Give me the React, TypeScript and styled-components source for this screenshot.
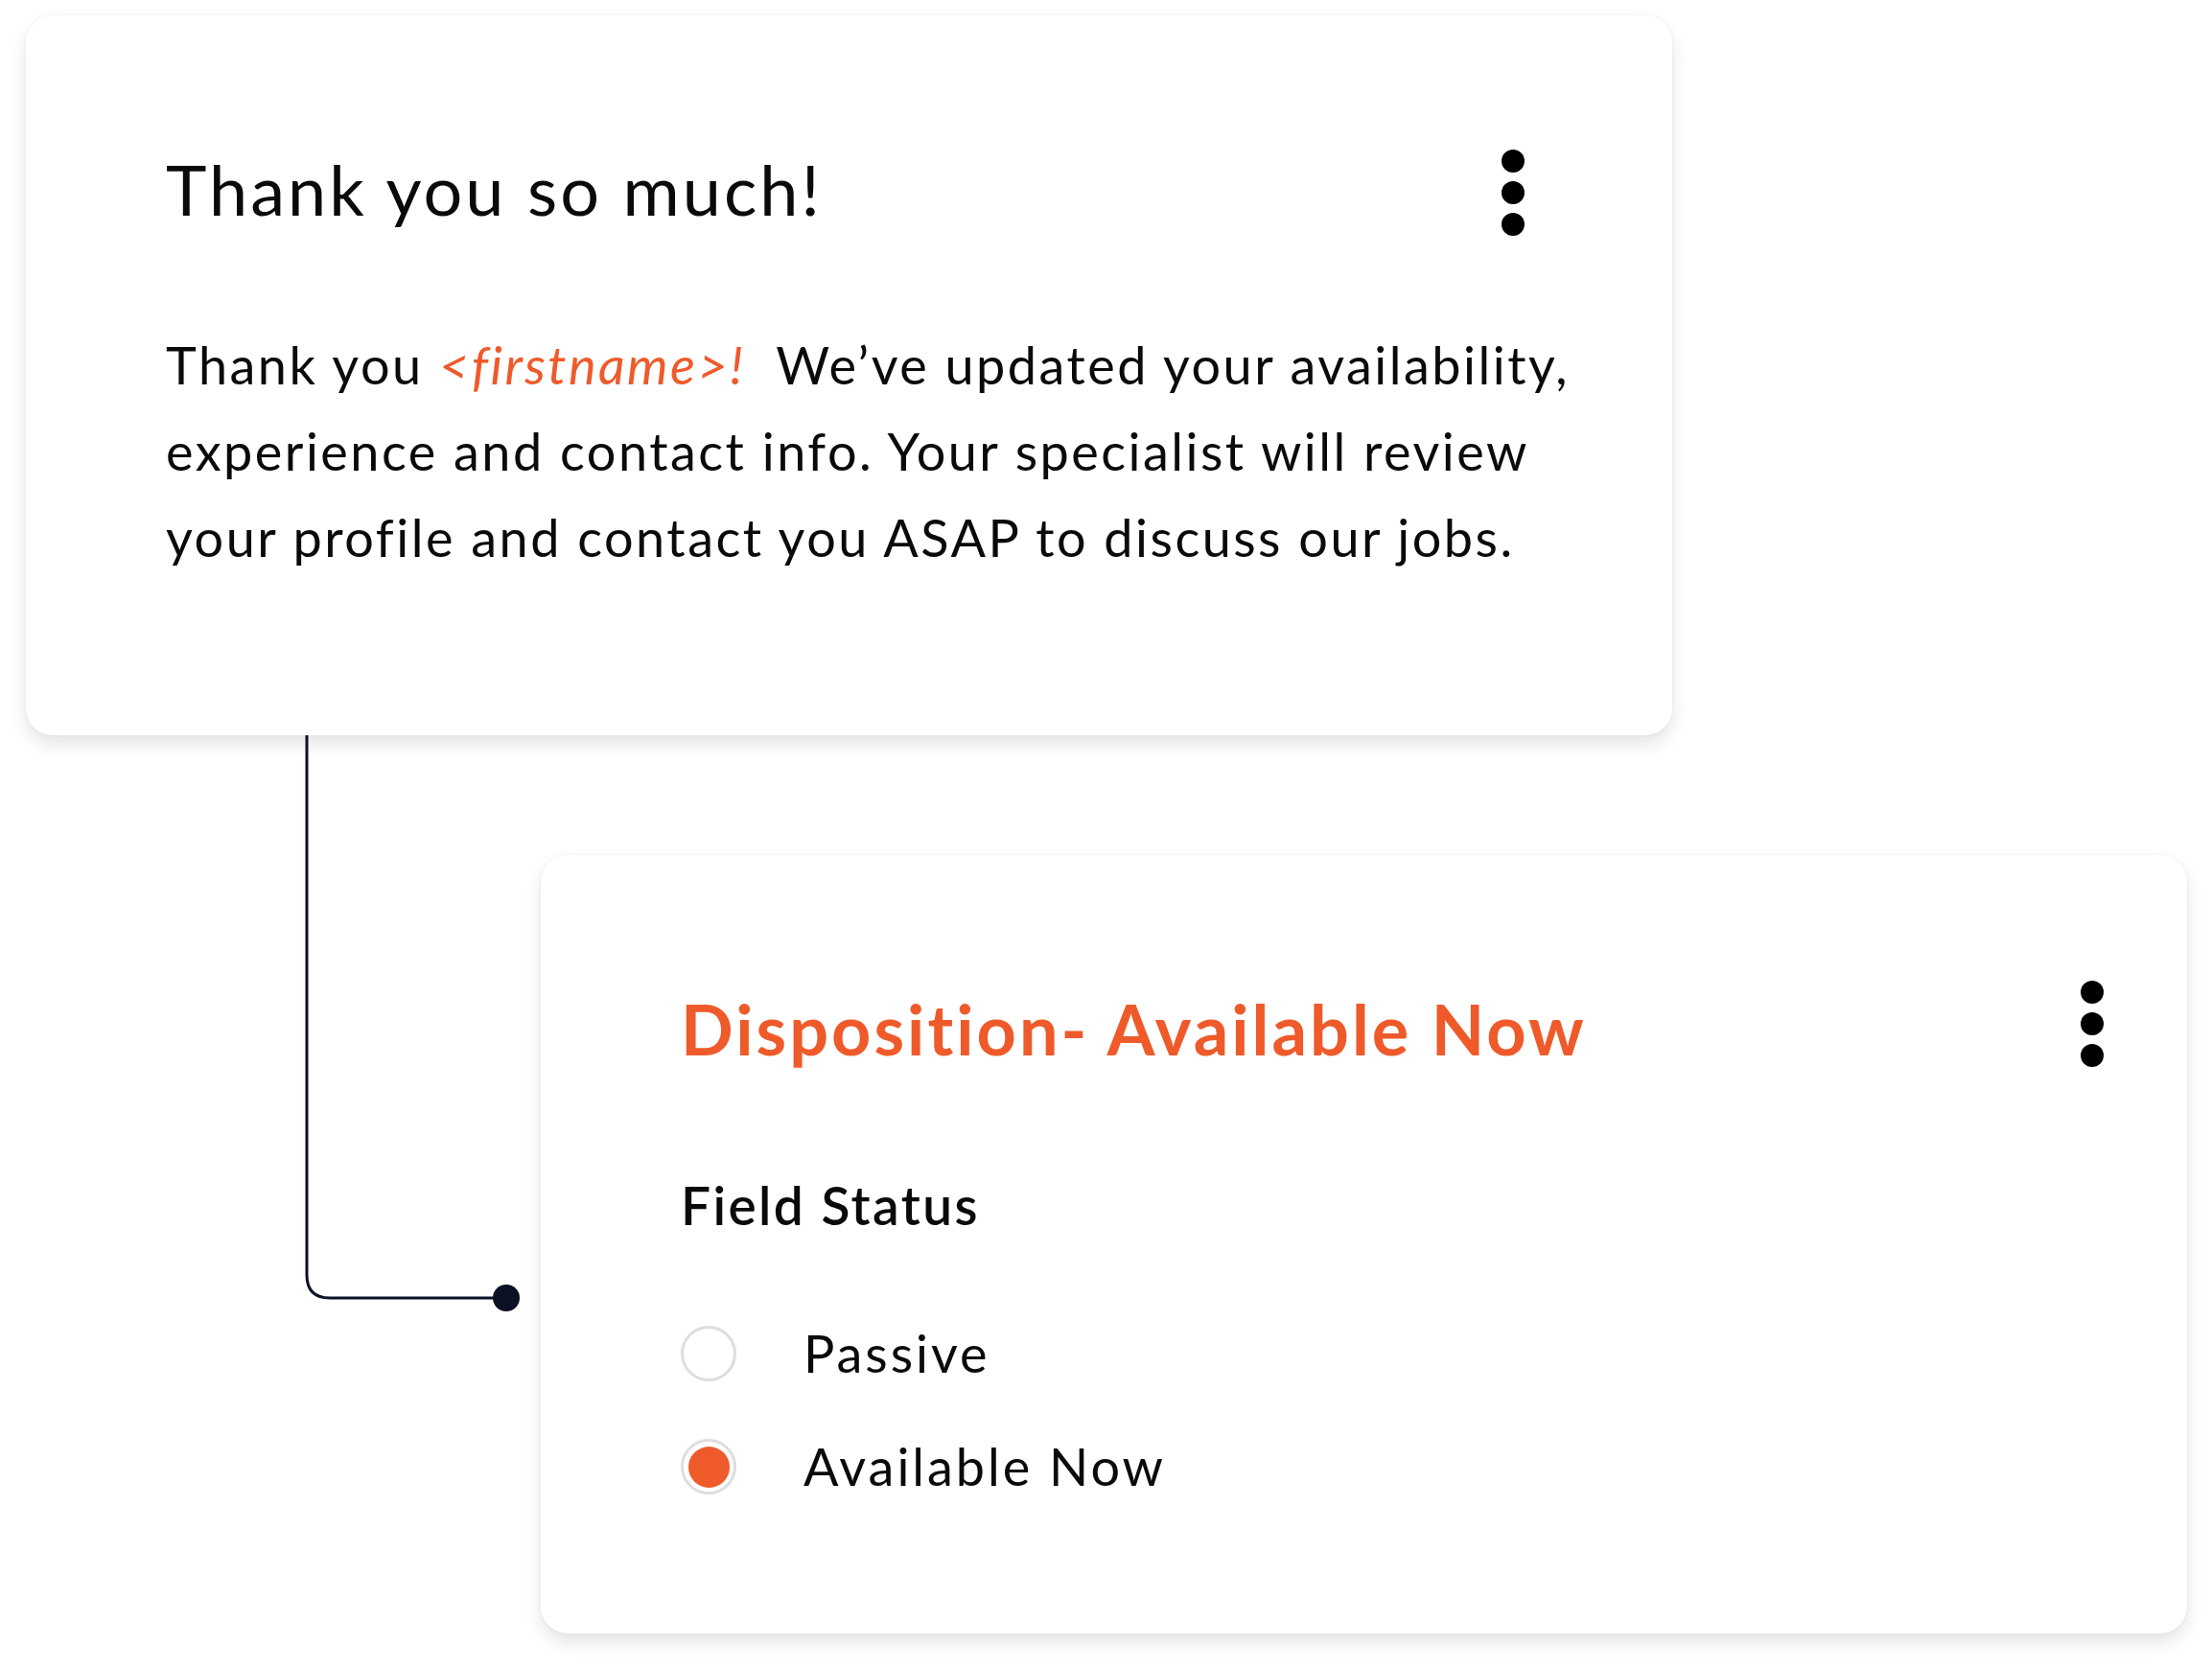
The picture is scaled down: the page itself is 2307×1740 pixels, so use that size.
import React from 'react';
import styled, { createGlobalStyle } from 'styled-components';

const GlobalStyle = createGlobalStyle`
    html, body {
        margin: 0;
        padding: 0;
        background: #ffffff;
    }
    body {
        font-family: 'Lato', 'Open Sans', sans-serif;
        color: #0a0a0a;
    }
`;

const ORANGE = '#ef5a2a';
const NAVY = '#0d1126';

const Canvas = styled.div`
    display: flex;
    flex-direction: column;
    padding: 16px 0 36px 27px;
`;

const Card = styled.div<{ $top: number; $bottom: number }>`
    width: 1717px;
    box-sizing: border-box;
    background: #ffffff;
    border-radius: 28px;
    padding: ${p => p.$top}px 0 ${p => p.$bottom}px 146px;
    box-shadow:
        0 0 4px rgba(0, 0, 0, 0.05),
        0 10px 18px rgba(0, 0, 0, 0.1);
`;

const CardHeader = styled.div<{ $right: number }>`
    display: flex;
    justify-content: space-between;
    align-items: flex-start;
    padding-right: ${p => p.$right}px;
`;

const Title = styled.h2<{ $accent?: boolean; $offset: number }>`
    margin: ${p => p.$offset}px 0 0;
    font-size: 72px;
    line-height: 72px;
    letter-spacing: 0.042em;
    font-weight: ${p => (p.$accent ? 700 : 400)};
    color: ${p => (p.$accent ? ORANGE : '#0a0a0a')};
`;

const Kebab = styled.button`
    display: flex;
    flex-direction: column;
    gap: 9px;
    padding: 0;
    border: 0;
    background: none;
    cursor: pointer;

    span {
        width: 24px;
        height: 24px;
        border-radius: 50%;
        background: #000;
    }
`;

const Message = styled.p`
    margin: 90px 0 0;
    max-width: 1490px;
    font-size: 54px;
    line-height: 90px;
    letter-spacing: 0.046em;
`;

const Placeholder = styled.em`
    color: ${ORANGE};
`;

const Lower = styled.div`
    display: flex;
    align-items: flex-start;
`;

const Connector = styled.svg`
    flex: 0 0 537px;
    height: 610px;
`;

const FormCard = styled(Card)`
    margin-top: 125px;
`;

const FieldLabel = styled.div`
    margin-top: 109px;
    font-size: 55px;
    line-height: 70px;
    letter-spacing: 0.044em;
    font-weight: 600;
`;

const Options = styled.div`
    display: flex;
    flex-direction: column;
    gap: 60px;
    margin-top: 91px;
`;

const Option = styled.label`
    display: flex;
    align-items: center;
    gap: 70px;
    font-size: 54px;
    line-height: 58px;
    letter-spacing: 0.055em;
    cursor: pointer;
`;

const Radio = styled.span<{ $checked?: boolean }>`
    flex: 0 0 auto;
    width: 58px;
    height: 58px;
    box-sizing: border-box;
    border-radius: 50%;
    border: 3px solid #dedede;
    display: flex;
    align-items: center;
    justify-content: center;

    &::after {
        content: '';
        width: 43px;
        height: 43px;
        border-radius: 50%;
        background: ${p => (p.$checked ? ORANGE : 'transparent')};
    }
`;

const MenuDots = () => (
    <Kebab aria-label="More">
        <span />
        <span />
        <span />
    </Kebab>
);

const statuses = [
    { label: 'Passive', checked: false },
    { label: 'Available Now', checked: true },
];

const App: React.FC = () => {
    return (
        <Canvas>
            <GlobalStyle />
            <Card $top={140} $bottom={161}>
                <CardHeader $right={154}>
                    <Title $offset={5}>Thank you so much!</Title>
                    <MenuDots />
                </CardHeader>
                <Message>
                    Thank you <Placeholder>&lt;firstname&gt;!</Placeholder>{'\u00a0 '}We’ve updated your
                    availability, experience and contact info. Your specialist will review your profile
                    and contact you ASAP to discuss our jobs.
                </Message>
            </Card>

            <Lower>
                {/* elbow line from the message card down to the disposition card */}
                <Connector viewBox="0 0 537 610">
                    <path
                        d="M293 0 V563 Q293 587 317 587 H501"
                        fill="none"
                        stroke={NAVY}
                        strokeWidth={3}
                    />
                    <circle cx={501} cy={587} r={14} fill={NAVY} />
                </Connector>

                <FormCard $top={131} $bottom={145}>
                    <CardHeader $right={87}>
                        <Title $accent $offset={14}>Disposition- Available Now</Title>
                        <MenuDots />
                    </CardHeader>
                    <FieldLabel>Field Status</FieldLabel>
                    <Options>
                        {statuses.map(s => (
                            <Option key={s.label}>
                                <Radio $checked={s.checked} />
                                {s.label}
                            </Option>
                        ))}
                    </Options>
                </FormCard>
            </Lower>
        </Canvas>
    );
};

export default App;
